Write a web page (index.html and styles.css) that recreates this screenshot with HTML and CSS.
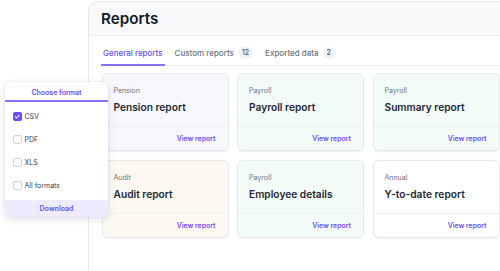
FILE: index.html
```html
<!DOCTYPE html>
<html>
<head>
<meta charset="utf-8">
<link rel="stylesheet" href="styles.css">
</head>
<body>
<div class="page">
  <div class="panel">
    <div class="panel-head"><h1 class="title">Reports</h1></div>
    <div class="tabs">
      <div class="tab active">General reports</div>
      <div class="tab">Custom reports <span class="badge">12</span></div>
      <div class="tab">Exported data <span class="badge">2</span></div>
    </div>
    <div class="grid">
      <div class="card lav">
        <div class="card-body"><div class="label">Pension</div><div class="name">Pension report</div></div>
        <div class="card-foot"><a class="link">View report</a></div>
      </div>
      <div class="card mint">
        <div class="card-body"><div class="label">Payroll</div><div class="name">Payroll report</div></div>
        <div class="card-foot"><a class="link">View report</a></div>
      </div>
      <div class="card mint">
        <div class="card-body"><div class="label">Payroll</div><div class="name">Summary report</div></div>
        <div class="card-foot"><a class="link">View report</a></div>
      </div>
      <div class="card cream">
        <div class="card-body"><div class="label">Audit</div><div class="name">Audit report</div></div>
        <div class="card-foot"><a class="link">View report</a></div>
      </div>
      <div class="card mint">
        <div class="card-body"><div class="label">Payroll</div><div class="name">Employee details</div></div>
        <div class="card-foot"><a class="link">View report</a></div>
      </div>
      <div class="card white">
        <div class="card-body"><div class="label">Annual</div><div class="name">Y-to-date report</div></div>
        <div class="card-foot"><a class="link">View report</a></div>
      </div>
    </div>
  </div>

  <div class="dropdown">
    <div class="dd-head">Choose format</div>
    <div class="dd-list">
      <label class="opt"><span class="box checked"><svg viewBox="0 0 10 10" width="7" height="7"><path d="M2 5.2 L4.2 7.2 L8 3" fill="none" stroke="#fff" stroke-width="1.6" stroke-linecap="round" stroke-linejoin="round"/></svg></span>CSV</label>
      <label class="opt"><span class="box"></span>PDF</label>
      <label class="opt"><span class="box"></span>XLS</label>
      <label class="opt"><span class="box"></span>All formats</label>
    </div>
    <div class="dd-btn">Download</div>
  </div>
</div>
</body>
</html>
```

FILE: styles.css
```css
* { box-sizing: border-box; }
html, body { margin: 0; padding: 0; background: #fff; }
body {
  font-family: Inter, "Noto Sans", "Liberation Sans", sans-serif;
  color: #1f2937;
  width: 500px;
  height: 271px;
  overflow: hidden;
}
.page { position: relative; height: 271px; overflow: hidden; }

.panel {
  margin-left: 88px;
  margin-top: 1px;
  height: 270px;
  width: 412px;
  border-left: 1px solid #e6e8ec;
  border-top: 1px solid #e6e8ec;
  border-top-left-radius: 10px;
  overflow: hidden;
}
.panel-head {
  height: 34px;
  background: #f8f9fb;
  border-bottom: 1px solid #eceef1;
  padding-left: 12px;
  display: flex;
  align-items: center;
}
.title {
  margin: 0;
  font-size: 15.2px;
  font-weight: 600;
  color: #111827;
}

.tabs {
  display: flex;
  margin: 0 0 0 12px;
  height: 30px;
  border-bottom: 1px solid #eceef1;
  gap: 8px;
}
.tab {
  display: flex;
  align-items: center;
  gap: 4px;
  font-size: 8px;
  font-weight: 500;
  color: #6b7280;
  padding: 5px 2px 0;
  margin-bottom: -1px;
  border-bottom: 2px solid transparent;
}
.tab.active {
  color: #6b4ef6;
  border-bottom-color: #8b70fb;
}
.badge {
  display: inline-flex;
  align-items: center;
  justify-content: center;
  min-width: 12px;
  height: 12px;
  padding: 0 4px;
  border-radius: 6px;
  background: #f1f2f5;
  color: #4b5563;
  font-size: 7px;
  font-weight: 500;
}

.grid {
  display: grid;
  grid-template-columns: repeat(3, 127px);
  grid-auto-rows: 78px;
  column-gap: 8.5px;
  row-gap: 8.5px;
  padding: 7px 0 0 12.5px;
}
.card {
  border: 1px solid #e7e9ed;
  border-radius: 6px;
  box-shadow: 0 1px 2px rgba(17, 24, 39, 0.06);
  display: flex;
  flex-direction: column;
  overflow: hidden;
}
.lav { background: #f7f7fe; }
.mint { background: #f3fbf8; }
.cream { background: #fdf9f0; }
.white { background: #ffffff; }
.card-body {
  height: 53px;
  border-bottom: 1px solid #eceef0;
  padding: 12px 11px 0;
}
.label {
  font-size: 7px;
  line-height: 10px;
  color: #6b7280;
}
.name {
  margin-top: 3px;
  font-size: 10.2px;
  line-height: 16px;
  font-weight: 600;
  color: #1f2937;
}
.card-foot {
  flex: 1;
  display: flex;
  align-items: center;
  justify-content: flex-end;
  padding-right: 12px;
}
.link {
  font-size: 6.9px;
  font-weight: 600;
  color: #6b4ef6;
}

.dropdown {
  position: absolute;
  left: 5px;
  top: 82px;
  width: 103px;
  background: #fff;
  border-radius: 6px;
  box-shadow: 0 2px 8px rgba(17, 24, 39, 0.12), 0 0 0 1px rgba(17, 24, 39, 0.03);
  overflow: hidden;
}
.dd-head {
  height: 20px;
  padding-top: 2px;
  display: flex;
  align-items: center;
  justify-content: center;
  font-size: 7px;
  font-weight: 600;
  color: #6b4ef6;
  border-bottom: 2px solid #8b70fb;
}
.dd-list { padding: 3px 0; }
.opt {
  height: 23px;
  display: flex;
  align-items: center;
  gap: 3px;
  padding-left: 8px;
  font-size: 7px;
  color: #374151;
}
.box {
  width: 8.5px;
  height: 8.5px;
  border: 1px solid #cfd3da;
  border-radius: 2px;
  background: #fff;
  display: inline-flex;
  align-items: center;
  justify-content: center;
}
.box.checked {
  background: #6b4ef6;
  border-color: #6b4ef6;
}
.dd-btn {
  height: 17px;
  background: #efebff;
  display: flex;
  align-items: center;
  justify-content: center;
  font-size: 7px;
  font-weight: 600;
  color: #6b4ef6;
}
```
